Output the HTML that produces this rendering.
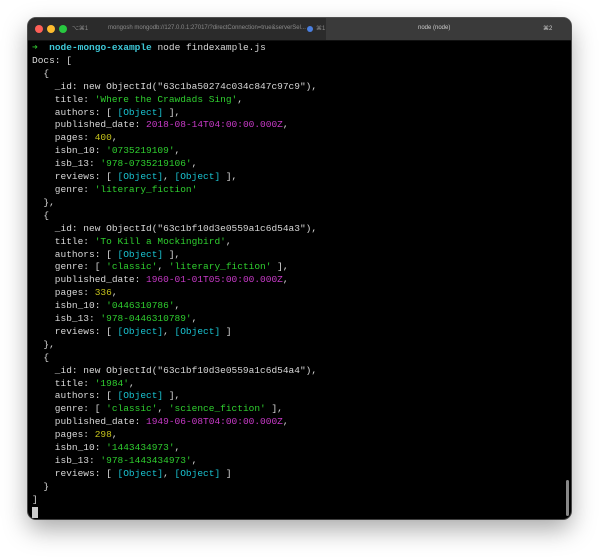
<!DOCTYPE html>
<html><head><style>
body{margin:0;width:600px;height:558px;background:#fff;overflow:hidden;position:relative;font-family:"Liberation Sans",sans-serif}
.win{position:absolute;left:28px;top:18px;width:543px;height:501px;background:#000;border-radius:8px;box-shadow:0 10px 25px rgba(0,0,0,.35),0 0 0 1px #555;overflow:hidden}
.bar{position:absolute;left:0;top:0;width:100%;height:22px;background:#2b2b2b;border-bottom:1px solid #111}
.tab2{position:absolute;left:298px;top:0;right:0;height:22px;background:#3a3a3a}
.dot{position:absolute;top:7px;width:8px;height:8px;border-radius:50%}
.t{position:absolute;top:7px;font-size:6px;color:#8a8a8a;white-space:nowrap}
pre{position:absolute;left:4px;top:24px;margin:0;font-family:"Liberation Mono",monospace;font-size:9.5px;line-height:12.9px;color:#d8d8d8}
.g{color:#2fbf2f}.c{color:#19c2d0}.m{color:#c83ac8}.y{color:#c7c41c}.a{color:#2fcf2f}
.cy{color:#3ec8d8;font-weight:bold}
.cur{display:inline-block;width:6px;height:11px;background:#ccc;vertical-align:-2px}
.sb{position:absolute;left:538px;top:462px;width:3px;height:36px;background:#888;border-radius:2px}
</style></head><body>
<div class="win">
<div class="bar"><div class="tab2"></div>
<div class="dot" style="left:7px;background:#fe5f57"></div>
<div class="dot" style="left:19px;background:#febc2e"></div>
<div class="dot" style="left:31px;background:#28c840"></div>
<div class="t" style="left:44px">⌥⌘1</div>
<div class="t" style="left:80px">mongosh mongodb://127.0.0.1:27017/?directConnection=true&amp;serverSel...</div>
<div class="dot" style="left:279px;top:8px;width:6px;height:6px;background:#4a7fe0"></div>
<div class="t" style="left:288px">⌘1</div>
<div class="t" style="left:390px;color:#ccc">node (node)</div>
<div class="t" style="left:515px;color:#ccc">⌘2</div>
</div>
<pre><span class="g">➜</span>  <span class="cy">node-mongo-example</span> node findexample.js
Docs: [
  {
    _id: new ObjectId("63c1ba50274c034c847c97c9"),
    title: <span class="a">'Where the Crawdads Sing'</span>,
    authors: [ <span class="c">[Object]</span> ],
    published_date: <span class="m">2018-08-14T04:00:00.000Z</span>,
    pages: <span class="y">400</span>,
    isbn_10: <span class="a">'0735219109'</span>,
    isb_13: <span class="a">'978-0735219106'</span>,
    reviews: [ <span class="c">[Object]</span>, <span class="c">[Object]</span> ],
    genre: <span class="a">'literary_fiction'</span>
  },
  {
    _id: new ObjectId("63c1bf10d3e0559a1c6d54a3"),
    title: <span class="a">'To Kill a Mockingbird'</span>,
    authors: [ <span class="c">[Object]</span> ],
    genre: [ <span class="a">'classic'</span>, <span class="a">'literary_fiction'</span> ],
    published_date: <span class="m">1960-01-01T05:00:00.000Z</span>,
    pages: <span class="y">336</span>,
    isbn_10: <span class="a">'0446310786'</span>,
    isb_13: <span class="a">'978-0446310789'</span>,
    reviews: [ <span class="c">[Object]</span>, <span class="c">[Object]</span> ]
  },
  {
    _id: new ObjectId("63c1bf10d3e0559a1c6d54a4"),
    title: <span class="a">'1984'</span>,
    authors: [ <span class="c">[Object]</span> ],
    genre: [ <span class="a">'classic'</span>, <span class="a">'science_fiction'</span> ],
    published_date: <span class="m">1949-06-08T04:00:00.000Z</span>,
    pages: <span class="y">298</span>,
    isbn_10: <span class="a">'1443434973'</span>,
    isb_13: <span class="a">'978-1443434973'</span>,
    reviews: [ <span class="c">[Object]</span>, <span class="c">[Object]</span> ]
  }
]
<span class="cur"></span></pre>
<div class="sb"></div>
</div>
</body></html>
